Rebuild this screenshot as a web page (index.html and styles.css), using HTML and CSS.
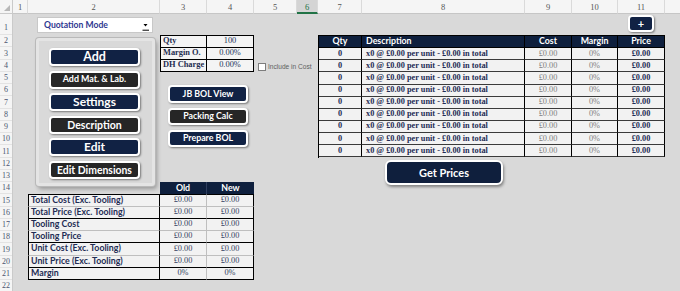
FILE: index.html
```html
<!DOCTYPE html>
<html>
<head>
<meta charset="utf-8">
<link rel="stylesheet" href="styles.css">
</head>
<body>
<div class="sheet">
  <div class="corner"><span class="tri"></span></div>
  <div class="ch">1</div>
  <div class="ch">2</div>
  <div class="ch">3</div>
  <div class="ch">4</div>
  <div class="ch">5</div>
  <div class="ch sel">6</div>
  <div class="ch">7</div>
  <div class="ch">8</div>
  <div class="ch">9</div>
  <div class="ch">10</div>
  <div class="ch">11</div>
  <div class="ch last"></div>

  <div class="rh">
    <div class="rn r1">1</div><div class="rn">2</div><div class="rn">3</div><div class="rn">4</div>
    <div class="rn">5</div><div class="rn">6</div><div class="rn">7</div><div class="rn">8</div>
    <div class="rn">9</div><div class="rn">10</div><div class="rn">11</div><div class="rn">12</div>
    <div class="rn">13</div><div class="rn">14</div><div class="rn">15</div><div class="rn">16</div>
    <div class="rn">17</div><div class="rn">18</div><div class="rn">19</div><div class="rn">20</div>
    <div class="rn">21</div><div class="rn">22</div>
  </div>

  <div class="dd">
    <span>Quotation Mode</span>
    <svg class="arrow" width="7" height="13" viewBox="0 0 7 13"><polygon points="1.5,6 5.5,6 3.5,8.5" fill="#000"/><line x1="0.5" y1="12.2" x2="7" y2="12.2" stroke="#000" stroke-width="1"/></svg>
  </div>

  <div class="plus btn navy">+</div>

  <div class="panel">
    <div class="btn navy b-add">Add</div>
    <div class="btn blk b-mat">Add Mat. &amp; Lab.</div>
    <div class="btn navy b-set">Settings</div>
    <div class="btn blk b-desc">Description</div>
    <div class="btn navy b-edit">Edit</div>
    <div class="btn blk b-dim">Edit Dimensions</div>
  </div>

  <div class="qt">
    <div class="ql">Qty</div><div class="qv">100</div>
    <div class="ql">Margin O.</div><div class="qv">0.00%</div>
    <div class="ql">DH Charge</div><div class="qv">0.00%</div>
  </div>

  <div class="chk"><span class="box"></span><span>Include in Cost</span></div>

  <div class="side">
    <div class="btn navy s1">JB BOL View</div>
    <div class="btn blk s2">Packing Calc</div>
    <div class="btn navy s2">Prepare BOL</div>
  </div>

  <div class="mt">
    <div class="mh">Qty</div><div class="mh left">Description</div><div class="mh">Cost</div><div class="mh">Margin</div><div class="mh">Price</div>
    <div class="md q">0</div><div class="md d">x0 @ £0.00 per unit - £0.00 in total</div><div class="md c">£0.00</div><div class="md c">0%</div><div class="md p">£0.00</div>
    <div class="md q">0</div><div class="md d">x0 @ £0.00 per unit - £0.00 in total</div><div class="md c">£0.00</div><div class="md c">0%</div><div class="md p">£0.00</div>
    <div class="md q">0</div><div class="md d">x0 @ £0.00 per unit - £0.00 in total</div><div class="md c">£0.00</div><div class="md c">0%</div><div class="md p">£0.00</div>
    <div class="md q">0</div><div class="md d">x0 @ £0.00 per unit - £0.00 in total</div><div class="md c">£0.00</div><div class="md c">0%</div><div class="md p">£0.00</div>
    <div class="md q">0</div><div class="md d">x0 @ £0.00 per unit - £0.00 in total</div><div class="md c">£0.00</div><div class="md c">0%</div><div class="md p">£0.00</div>
    <div class="md q">0</div><div class="md d">x0 @ £0.00 per unit - £0.00 in total</div><div class="md c">£0.00</div><div class="md c">0%</div><div class="md p">£0.00</div>
    <div class="md q">0</div><div class="md d">x0 @ £0.00 per unit - £0.00 in total</div><div class="md c">£0.00</div><div class="md c">0%</div><div class="md p">£0.00</div>
    <div class="md q">0</div><div class="md d">x0 @ £0.00 per unit - £0.00 in total</div><div class="md c">£0.00</div><div class="md c">0%</div><div class="md p">£0.00</div>
    <div class="md q">0</div><div class="md d">x0 @ £0.00 per unit - £0.00 in total</div><div class="md c">£0.00</div><div class="md c">0%</div><div class="md p">£0.00</div>
  </div>

  <div class="gp btn navy">Get Prices</div>

  <div class="bt">
    <div class="be"></div><div class="bh old">Old</div><div class="bh">New</div>
    <div class="br first"><div class="bl">Total Cost (Exc. Tooling)</div><div class="bv">£0.00</div><div class="bv n">£0.00</div></div>
    <div class="br end"><div class="bl">Total Price (Exc. Tooling)</div><div class="bv">£0.00</div><div class="bv n">£0.00</div></div>
    <div class="br"><div class="bl">Tooling Cost</div><div class="bv">£0.00</div><div class="bv n">£0.00</div></div>
    <div class="br end"><div class="bl">Tooling Price</div><div class="bv">£0.00</div><div class="bv n">£0.00</div></div>
    <div class="br"><div class="bl">Unit Cost (Exc. Tooling)</div><div class="bv">£0.00</div><div class="bv n">£0.00</div></div>
    <div class="br end"><div class="bl">Unit Price (Exc. Tooling)</div><div class="bv">£0.00</div><div class="bv n">£0.00</div></div>
    <div class="br end"><div class="bl">Margin</div><div class="bv">0%</div><div class="bv n">0%</div></div>
  </div>
</div>
</body>
</html>
```

FILE: styles.css
```css
* { box-sizing: border-box; margin: 0; padding: 0; }
body {
  margin: 0;
  width: 680px;
  height: 291px;
  overflow: hidden;
  background: #d9d9d9;
  font-family: Lato, "Liberation Sans", sans-serif;
}
.sheet {
  display: grid;
  grid-template-columns: 13px 15px 132px 47px 47px 43px 21px 44px 163px 47px 46px 47px 15px;
  grid-template-rows: 14px 21px repeat(21, 12.25px);
  width: 680px;
  height: 291px;
  background: #d9d9d9;
}

/* headers */
.corner {
  grid-column: 1; grid-row: 1;
  background: #f5f5f5;
  border-right: 1px solid #cacaca;
  border-bottom: 1px solid #cacaca;
  display: flex; align-items: flex-end; justify-content: flex-end;
  padding: 0 2px 2px 0;
}
.corner .tri {
  width: 0; height: 0;
  border-left: 6px solid transparent;
  border-bottom: 6px solid #b8b8b8;
}
.ch {
  background: #f5f5f5;
  border-right: 1px solid #dadada;
  border-bottom: 1px solid #c6c6c6;
  display: flex; align-items: center; justify-content: center;
  font: 8.5px "Liberation Serif", serif;
  color: #555;
  padding-top: 1px;
}
.ch.sel {
  background: #d4d4d4;
  color: #217346;
  border-bottom: 2px solid #217346;
}
.ch.last { border-right: none; }
.rh {
  grid-column: 1; grid-row: 2 / 24;
  display: flex; flex-direction: column;
  background: #f5f5f5;
  border-right: 1px solid #cacaca;
}
.rn {
  flex: none;
  height: 12.25px;
  display: flex; align-items: flex-end; justify-content: center;
  font: 8px "Liberation Serif", serif;
  line-height: 9px;
  color: #4b5670;
  padding-bottom: 1px;
  border-bottom: 1px solid #e3e3e3;
}
.rn.r1 { height: 21px; padding-bottom: 2px; }

/* dropdown */
.dd {
  grid-column: 3; grid-row: 2;
  margin: 3px 0 2px 9px;
  width: 116px;
  background: #fff;
  border: 1px solid #c8c8c8;
  display: flex; align-items: center; justify-content: space-between;
  padding: 0 3px 0 6px;
  font-weight: 700;
  font-size: 8.6px;
  color: #2e3790;
}
.dd .arrow { align-self: flex-end; margin-bottom: 1px; }

/* buttons */
.btn {
  display: flex; align-items: center; justify-content: center;
  color: #fff;
  font-weight: 700;
  border: 2px solid #fff;
  border-radius: 4px;
  box-shadow: 1px 1px 2px rgba(0,0,0,0.45);
  white-space: nowrap;
  line-height: 1;
}
.navy { background: #112244; }
.blk { background: #262626; }

.plus {
  grid-column: 12; grid-row: 2;
  align-self: start;
  margin: 1px 0 0 10px;
  width: 26px; height: 17px;
  font-size: 11px;
}

.panel {
  grid-column: 3; grid-row: 3 / 16;
  align-self: start;
  margin: 3px 0 0 8px;
  width: 119px; height: 148px;
  background: #d9d9d9;
  border: 3px solid #e4e4e4;
  border-radius: 3px;
  box-shadow: 0 0 0 1px #b9b9b9, 2px 3px 4px rgba(0,0,0,0.3);
  display: flex; flex-direction: column;
  gap: 4.6px;
  padding: 7px 0 0 10px;
}
.panel .btn { width: 91px; height: 18px; }
.b-add { font-size: 12.5px; }
.b-mat { font-size: 8.9px; }
.b-set { font-size: 12px; }
.b-desc { font-size: 10.5px; }
.b-edit { font-size: 12px; }
.b-dim { font-size: 10.4px; }

.side {
  grid-column: 4 / 6; grid-row: 7 / 13;
  align-self: start;
  margin: 1px 0 0 8px;
  width: 80px;
  display: flex; flex-direction: column;
  gap: 5px;
}
.side .btn { font-size: 8.8px; }
.side .s1 { height: 18px; }
.side .s2 { height: 17px; }

.gp {
  grid-column: 8 / 10; grid-row: 13 / 16;
  align-self: start;
  margin: 2.5px 0 0 67px;
  width: 118px; height: 25px;
  border-width: 2.5px;
  border-radius: 6px;
  background: #0f1f3d;
  font-size: 11px;
  box-shadow: 1px 2px 3px rgba(0,0,0,0.4);
}

/* qty table */
.qt {
  grid-column: 4 / 6; grid-row: 3 / 6;
  display: grid;
  grid-template-columns: 46px 47px;
  grid-template-rows: repeat(3, 1fr);
  border-top: 1px solid #000;
  border-left: 1px solid #000;
}
.ql, .qv {
  background: #f4f4f4;
  border-right: 1px solid #000;
  border-bottom: 1px solid #000;
  display: flex; align-items: center;
  font-family: "Liberation Serif", serif;
  font-size: 8.4px;
  line-height: 1;
}
.ql { padding-left: 2px; font-weight: 700; color: #1f2d50; }
.qv { justify-content: center; color: #24345a; }

.chk {
  grid-column: 6 / 8; grid-row: 5;
  display: flex; align-items: center;
  gap: 2px;
  padding: 2px 0 0 4px;
  font: 6.6px "Liberation Sans", sans-serif;
  color: #5f5f5f;
}
.chk .box {
  width: 8px; height: 8px;
  background: #fff;
  border: 1px solid #7d7d7d;
}

/* main table */
.mt {
  grid-column: 8 / 13; grid-row: 3 / 13;
  display: grid;
  grid-template-columns: 43px 163px 47px 46px 47px;
  grid-template-rows: repeat(10, 1fr);
  border-left: 1px solid #000;
  border-top: 1px solid #000;
}
.mh {
  background: #0e1f3d;
  color: #fff;
  font-weight: 700;
  font-size: 8.8px;
  display: flex; align-items: center; justify-content: center;
  border-right: 1px solid #000;
  border-bottom: 1px solid #000;
  line-height: 1;
}
.mh.left { justify-content: flex-start; padding-left: 4px; }
.md {
  background: #f2f2f2;
  border-right: 1px solid #000;
  border-bottom: 1px solid #3a3a3a;
  display: flex; align-items: center; justify-content: center;
  font-family: "Liberation Serif", serif;
  font-size: 8.3px;
  line-height: 1;
  white-space: nowrap;
}
.md.q { font-weight: 700; color: #1f2d55; }
.md.d { justify-content: flex-start; padding-left: 4px; font-weight: 700; color: #1f2d55; }
.md.c { color: #7f7f7f; }
.md.p { color: #1f2d55; font-weight: 700; }

/* bottom table */
.bt {
  grid-column: 3 / 6; grid-row: 15 / 23;
  display: grid;
  grid-template-columns: 132px 47px 47px;
  grid-template-rows: repeat(8, 1fr);
}
.be { background: transparent; }
.bh {
  background: #0e1f3d;
  color: #fff;
  font-weight: 700;
  font-size: 8.8px;
  display: flex; align-items: center; justify-content: center;
  line-height: 1;
}
.bh.old { border-right: 1px solid #2f3f5f; }
.br { display: contents; }
.bl, .bv {
  background: #f2f2f2;
  border-bottom: 1px solid #bfbfbf;
  display: flex; align-items: center;
  line-height: 1;
  white-space: nowrap;
}
.bl {
  border-left: 1px solid #000;
  border-right: 1px solid #000;
  padding-left: 2px;
  font-weight: 700;
  font-size: 8.8px;
  color: #1f2d55;
}
.bv {
  justify-content: center;
  border-right: 1px solid #bfbfbf;
  font-family: "Liberation Serif", serif;
  font-size: 8.3px;
  color: #33415e;
}
.bv.n { border-right-color: #000; }
.br.first > div { border-top: 1px solid #000; }
.br.end > div { border-bottom-color: #000; }
```
